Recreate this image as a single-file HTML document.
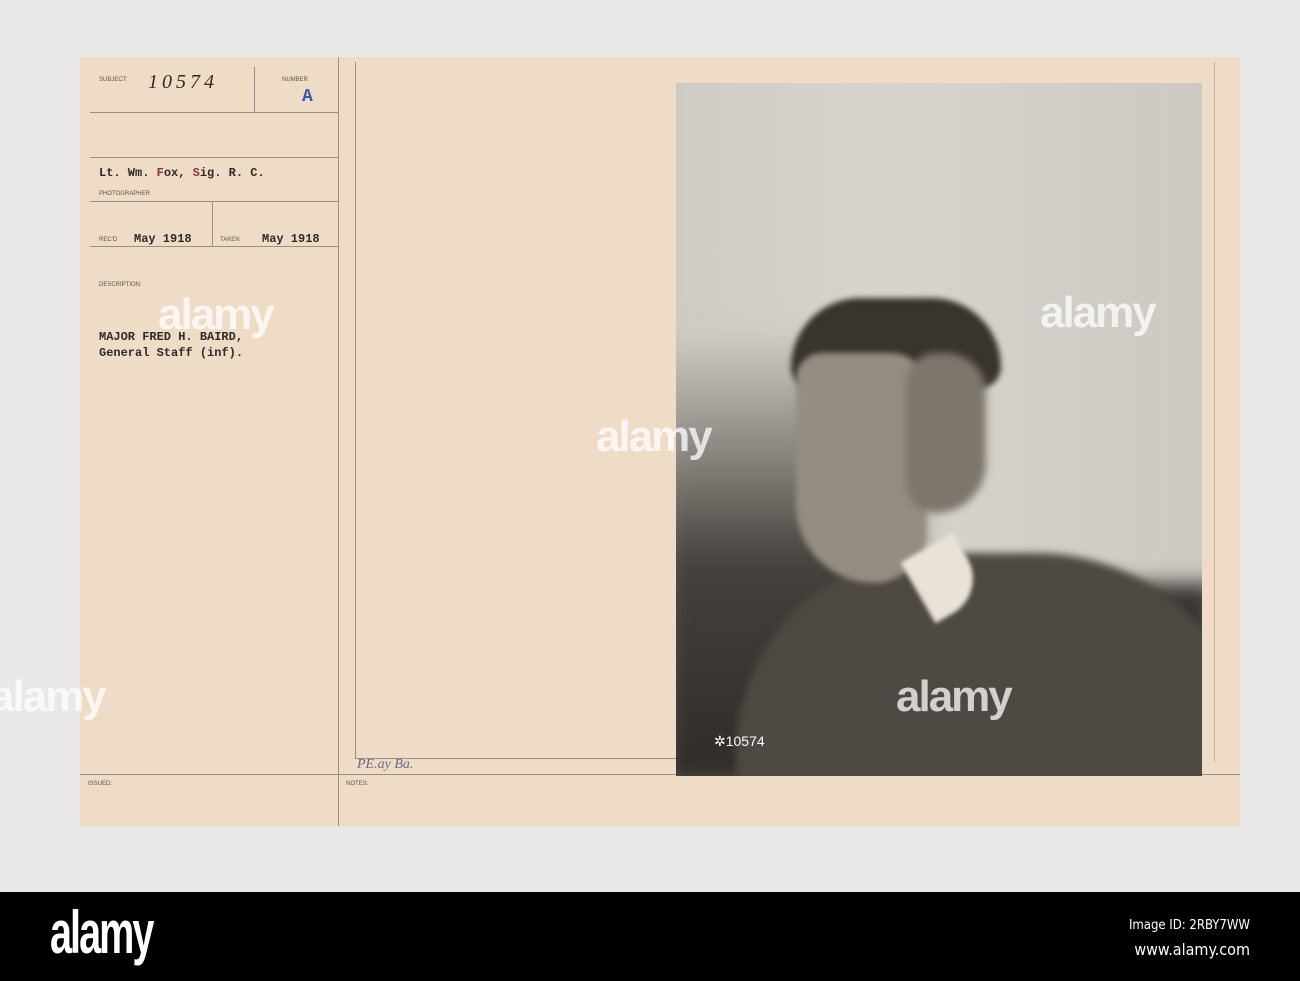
<!DOCTYPE html>
<html><head><style>
body{margin:0;width:1300px;height:981px;background:#e9e7e7;position:relative;overflow:hidden;font-family:"Liberation Mono",monospace}
.card{position:absolute;left:80px;top:57px;width:1160px;height:769px;background:#efdcc6}
.l{position:absolute;background:#9c8f84}
.t{position:absolute;color:#2e2a28;font-size:12px;font-weight:bold;white-space:nowrap}
.s{position:absolute;color:#5a524c;font-family:"Liberation Sans",sans-serif;font-size:6px;white-space:nowrap}
.photo{position:absolute;left:676px;top:83px;width:526px;height:693px;overflow:hidden;background:#c9c5bf}
.photo div{position:absolute}
.wm{position:absolute;color:rgba(255,255,255,.75);font-family:"Liberation Sans",sans-serif;font-weight:bold;font-size:44px;letter-spacing:-2px}
.bar{position:absolute;left:0;top:892px;width:1300px;height:89px;background:#000}
</style></head><body>
<div class="card"></div>
<div class="l" style="left:338px;top:57px;width:1px;height:769px"></div>
<div class="l" style="left:90px;top:112px;width:248px;height:1px"></div>
<div class="l" style="left:90px;top:157px;width:248px;height:1px"></div>
<div class="l" style="left:90px;top:201px;width:248px;height:1px"></div>
<div class="l" style="left:90px;top:246px;width:248px;height:1px"></div>
<div class="l" style="left:254px;top:67px;width:1px;height:45px"></div>
<div class="l" style="left:212px;top:202px;width:1px;height:44px"></div>
<div class="l" style="left:355px;top:62px;width:1px;height:696px"></div>
<div class="l" style="left:355px;top:758px;width:321px;height:1px"></div>
<div class="l" style="left:80px;top:774px;width:1160px;height:1px"></div>
<div class="l" style="left:1214px;top:62px;width:1px;height:700px;opacity:.5"></div>

<div class="s" style="left:99px;top:77px">SUBJECT:</div>
<div class="t" style="left:148px;top:71px;font-family:'Liberation Serif',serif;font-style:italic;font-weight:normal;font-size:20px;letter-spacing:4px">10574</div>
<div class="s" style="left:282px;top:77px">NUMBER</div>
<div class="t" style="left:302px;top:87px;color:#3b5ba8;font-size:18px">A</div>
<div class="t" style="left:99px;top:166px">Lt. Wm. <span style="color:#8b3333">F</span>ox, <span style="color:#8b3333">S</span>ig. R. C.</div>
<div class="s" style="left:99px;top:191px">PHOTOGRAPHER</div>
<div class="s" style="left:99px;top:237px">REC'D</div>
<div class="t" style="left:134px;top:232px">May 1918</div>
<div class="s" style="left:220px;top:237px">TAKEN</div>
<div class="t" style="left:262px;top:232px">May 1918</div>
<div class="s" style="left:99px;top:282px">DESCRIPTION:</div>
<div class="t" style="left:99px;top:330px">MAJOR FRED H. BAIRD,</div>
<div class="t" style="left:99px;top:346px">General Staff (inf).</div>
<div class="s" style="left:88px;top:781px">ISSUED:</div>
<div class="s" style="left:346px;top:781px">NOTES:</div>
<div class="t" style="left:357px;top:757px;font-family:'Liberation Serif',serif;font-style:italic;font-weight:normal;color:#6a6a80;font-size:14px">PE.ay Ba.</div>

<div class="photo">
 <div style="left:0;top:0;width:526px;height:693px;background:linear-gradient(90deg,#cfcbc5 0%,#d7d4ce 40%,#cdc9c2 100%)"></div>
 <div style="left:-20px;top:250px;width:260px;height:460px;background:linear-gradient(180deg,#cfcbc5 0%,#8e8983 25%,#45413c 50%,#2e2a26 100%);filter:blur(14px)"></div>
 <div style="left:300px;top:500px;width:240px;height:200px;background:#3a3632;filter:blur(10px)"></div>
 <div style="left:60px;top:470px;width:520px;height:320px;background:#4f4943;border-radius:200px 220px 0 0;filter:blur(4px)"></div>
 <div style="left:130px;top:230px;width:120px;height:120px;background:#8a8279;border-radius:40px;filter:blur(3px)"></div>
 <div style="left:115px;top:215px;width:210px;height:90px;background:#3a342f;border-radius:100px 100px 30px 30px;filter:blur(3px)"></div>
 <div style="left:120px;top:270px;width:130px;height:230px;background:#958c82;border-radius:30px 40px 60px 90px;filter:blur(3px)"></div>
 <div style="left:230px;top:270px;width:80px;height:160px;background:#7e766c;border-radius:30px 40px 50px 30px;filter:blur(4px)"></div>
 <div style="left:238px;top:460px;width:60px;height:70px;background:#e8e2d8;border-radius:0 0 40px 0;transform:rotate(-30deg);filter:blur(2px)"></div>
 <div style="left:38px;top:650px;font-family:'Liberation Sans',sans-serif;font-size:14px;color:#fff">✲10574</div>
</div>
<div class="wm" style="left:158px;top:290px">alamy</div>
<div class="wm" style="left:596px;top:412px">alamy</div>
<div class="wm" style="left:1040px;top:288px">alamy</div>
<div class="wm" style="left:-10px;top:672px">alamy</div>
<div class="wm" style="left:896px;top:672px">alamy</div>
<div class="bar">
 <div style="position:absolute;left:50px;top:6px;color:#fff;font-family:'Liberation Sans',sans-serif;font-weight:bold;font-size:60px;letter-spacing:-3px;transform:scaleX(.66);transform-origin:left">alamy</div>
 <div style="position:absolute;right:50px;top:22px;color:#fff;font-family:'DejaVu Sans Condensed','DejaVu Sans',sans-serif;font-size:13px;text-align:right;line-height:24px">Image ID: 2RBY7WW<br><span style="font-size:16px">www.alamy.com</span></div>
</div>
</body></html>
